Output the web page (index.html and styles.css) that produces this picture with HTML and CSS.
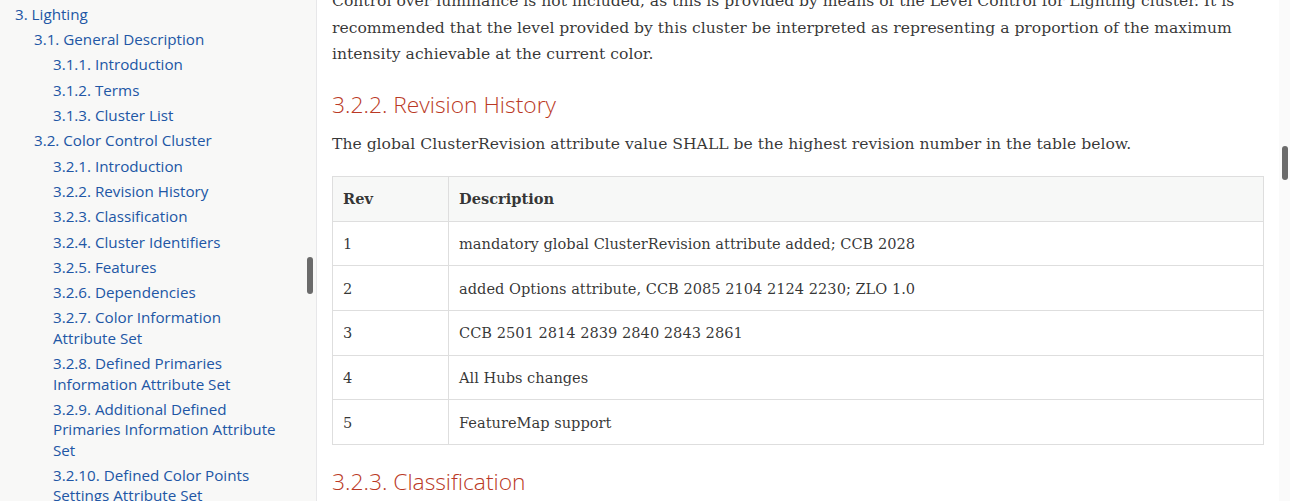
FILE: index.html
```html
<!DOCTYPE html>
<html>
<head>
<meta charset="utf-8">
<link rel="stylesheet" href="styles.css">
</head>
<body>
<div class="page">
  <nav class="toc">
    <ul class="toc-l1">
      <li><a>3. Lighting</a>
        <ul class="toc-sub">
          <li><a>3.1. General Description</a>
            <ul class="toc-sub">
              <li><a>3.1.1. Introduction</a></li>
              <li><a>3.1.2. Terms</a></li>
              <li><a>3.1.3. Cluster List</a></li>
            </ul>
          </li>
          <li><a>3.2. Color Control Cluster</a>
            <ul class="toc-sub">
              <li><a>3.2.1. Introduction</a></li>
              <li><a>3.2.2. Revision History</a></li>
              <li><a>3.2.3. Classification</a></li>
              <li><a>3.2.4. Cluster Identifiers</a></li>
              <li><a>3.2.5. Features</a></li>
              <li><a>3.2.6. Dependencies</a></li>
              <li><a>3.2.7. Color Information Attribute Set</a></li>
              <li><a>3.2.8. Defined Primaries Information Attribute Set</a></li>
              <li><a>3.2.9. Additional Defined Primaries Information Attribute Set</a></li>
              <li><a>3.2.10. Defined Color Points Settings Attribute Set</a></li>
            </ul>
          </li>
        </ul>
      </li>
    </ul>
    <div class="thumb toc-thumb"></div>
  </nav>
  <main class="content">
    <p class="para first">Control over luminance is not included, as this is provided by means of the Level Control for Lighting cluster. It is recommended that the level provided by this cluster be interpreted as representing a proportion of the maximum intensity achievable at the current color.</p>
    <h3 class="heading">3.2.2. Revision History</h3>
    <p class="para lead">The global ClusterRevision attribute value SHALL be the highest revision number in the table below.</p>
    <table class="rev-table">
      <thead>
        <tr><th class="col-rev">Rev</th><th>Description</th></tr>
      </thead>
      <tbody>
        <tr><td>1</td><td>mandatory global ClusterRevision attribute added; CCB 2028</td></tr>
        <tr><td>2</td><td>added Options attribute, CCB 2085 2104 2124 2230; ZLO 1.0</td></tr>
        <tr><td>3</td><td>CCB 2501 2814 2839 2840 2843 2861</td></tr>
        <tr><td>4</td><td>All Hubs changes</td></tr>
        <tr><td>5</td><td>FeatureMap support</td></tr>
      </tbody>
    </table>
    <h3 class="heading next">3.2.3. Classification</h3>
  </main>
  <div class="track"><div class="thumb main-thumb"></div></div>
</div>
</body>
</html>
```

FILE: styles.css
```css
* { box-sizing: border-box; }
html, body { margin: 0; padding: 0; height: 100%; }
body {
  background: #fff;
  overflow: hidden;
  color: rgba(0,0,0,0.8);
}
.page {
  display: flex;
  height: 501px;
  position: relative;
}
.toc {
  width: 317px;
  flex: 0 0 317px;
  background: #f8f8f7;
  border-right: 1px solid #e7e7e9;
  padding: 0 36px 0 15px;
  overflow: hidden;
  position: relative;
  font-family: "Open Sans", sans-serif;
  font-size: 15.2px;
  line-height: 20.4px;
}
.toc ul {
  list-style: none;
  margin: 0;
  padding: 0;
}
.toc-l1 { margin-top: -1px !important; }
.toc-sub { margin-left: 19px !important; }
.toc li { margin-top: 4.9px; }
.toc a { color: #2156a5; text-decoration: none; }
.thumb {
  position: absolute;
  background: #6b6b6b;
  border-radius: 4px;
  width: 6px;
}
.toc-thumb { left: 307px; top: 257px; height: 37px; }
.content {
  flex: 1;
  padding: 0 26px 0 15px;
  overflow: hidden;
  font-family: "DejaVu Serif", serif;
}
.para {
  font-size: 15.6px;
  line-height: 26.5px;
  margin: 0;
  color: rgba(0,0,0,0.8);
}
.para.first { margin-top: -12px; }
.heading {
  font-family: "Open Sans", sans-serif;
  font-weight: 300;
  color: #ba3925;
  font-size: 22.8px;
  line-height: 29px;
  margin: 22px 0 12px;
}
.heading.next { margin-top: 22px; }
.para.lead { margin-bottom: 19px; }
.rev-table {
  width: 932px;
  border-collapse: collapse;
  border: 1px solid #dedede;
  font-size: 14.6px;
}
.rev-table th, .rev-table td {
  border: 1px solid #dedede;
  height: 44.7px;
  padding: 0 10px;
  text-align: left;
  vertical-align: middle;
  color: rgba(0,0,0,0.8);
}
.rev-table thead th {
  background: #f7f8f7;
  font-weight: bold;
}
.col-rev { width: 116px; }
.track {
  flex: 0 0 11px;
  background: #fafafa;
  position: relative;
}
.main-thumb { left: 3px; top: 146px; height: 34px; }
```
